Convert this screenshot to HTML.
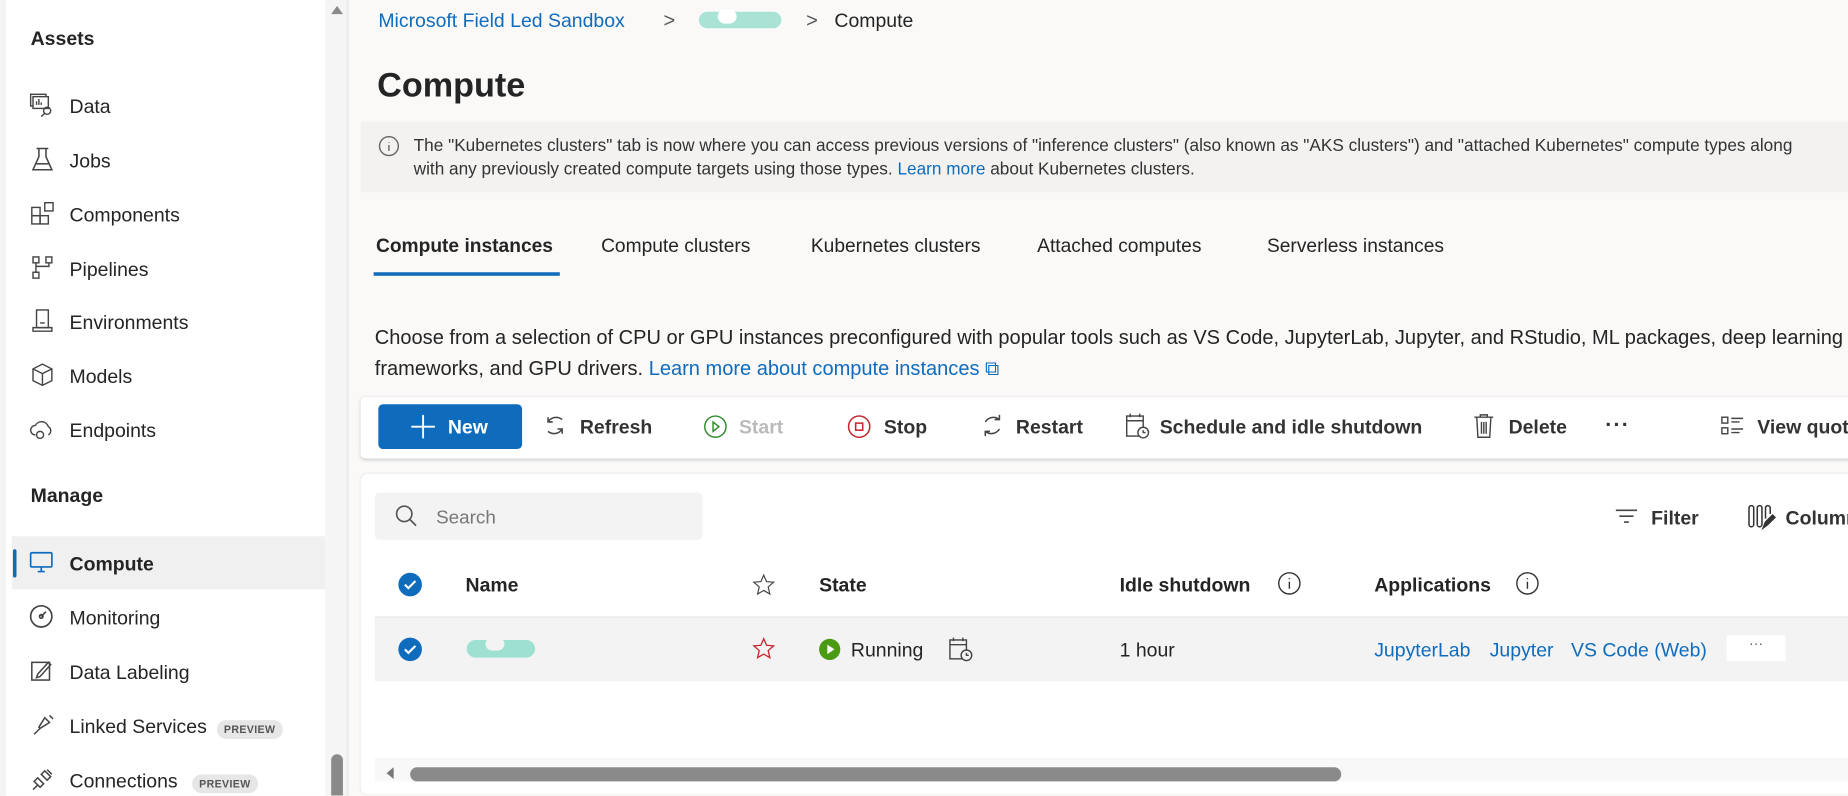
<!DOCTYPE html>
<html><head><meta charset="utf-8"><style>
*{box-sizing:border-box;margin:0;padding:0}
html,body{width:1848px;height:795px;overflow:hidden;background:#faf9f8;font-family:"Liberation Sans",sans-serif;color:#242424}
#w{position:absolute;left:0;top:0;width:1568px;height:675px;transform:scale(1.178571);transform-origin:0 0;overflow:hidden}
.a{position:absolute;white-space:nowrap}
.nav{font-size:16.5px;color:#242424}
.ic{position:absolute}
svg{overflow:visible}
.blue{color:#0f6cbd}
.pill{font-size:9px;background:#e6e6e6;color:#555;border-radius:9px;padding:3px 6px;font-weight:bold;letter-spacing:.3px}
.tb{font-size:16.5px;font-weight:600;color:#333}
</style></head><body><div id="w">
<!-- sidebar -->
<div class="a" style="left:0;top:0;width:5px;height:675px;background:#f3f3f3"></div>
<div class="a" style="left:5px;top:0;width:271px;height:675px;background:#fff"></div>
<div class="a" style="left:276px;top:0;width:18px;height:675px;background:#f5f5f5"></div>
<div class="a" style="left:294px;top:0;width:2px;height:675px;background:#ececec"></div>
<div class="a" style="left:281px;top:5px;width:0;height:0;border-left:5px solid transparent;border-right:5px solid transparent;border-bottom:7px solid #8a8a8a"></div>
<div class="a" style="left:281px;top:640px;width:10px;height:40px;background:#8a8a8a;border-radius:5px"></div>

<div class="a" style="left:26px;top:24px;font-size:16.5px;font-weight:600">Assets</div>
<svg class="ic" style="left:25px;top:79px" width="22" height="22" fill="none" stroke="#444" stroke-width="1.2"><rect x="1" y="1" width="13" height="10"/><rect x="3" y="3" width="13" height="10" fill="#fff"/><path d="M6 10V7M8 10V5M10 10V8"/><circle cx="15" cy="15" r="3"/><path d="M13 17l-3 3"/></svg>
<div class="a nav" style="left:59px;top:82px">Data</div>
<svg class="ic" style="left:27px;top:125px" width="20" height="22" fill="none" stroke="#444" stroke-width="1.3"><path d="M4 1h10M6 1v7L1 19h16L12 8V1"/><path d="M3 14h12"/></svg>
<div class="a nav" style="left:59px;top:128px">Jobs</div>
<svg class="ic" style="left:26px;top:171px" width="22" height="22" fill="none" stroke="#444" stroke-width="1.2"><rect x="1" y="5" width="7" height="7"/><rect x="1" y="12" width="7" height="7"/><rect x="8" y="12" width="7" height="7"/><rect x="12" y="1" width="7" height="7"/></svg>
<div class="a nav" style="left:59px;top:174px">Components</div>
<svg class="ic" style="left:27px;top:217px" width="22" height="22" fill="none" stroke="#444" stroke-width="1.2"><rect x="1" y="1" width="5" height="5"/><rect x="12" y="1" width="5" height="5"/><rect x="1" y="14" width="5" height="5"/><path d="M3.5 6v8M14.5 6v3H3.5"/></svg>
<div class="a nav" style="left:59px;top:220px">Pipelines</div>
<svg class="ic" style="left:27px;top:262px" width="22" height="22" fill="none" stroke="#444" stroke-width="1.2"><rect x="4" y="1" width="10" height="15"/><path d="M1 19h16v-3H1zM7 12h4"/></svg>
<div class="a nav" style="left:59px;top:265px">Environments</div>
<svg class="ic" style="left:26px;top:308px" width="22" height="22" fill="none" stroke="#444" stroke-width="1.2"><path d="M10 1l8 4v10l-8 4-8-4V5zM2 5l8 4 8-4M10 9v10"/></svg>
<div class="a nav" style="left:59px;top:311px">Models</div>
<svg class="ic" style="left:25px;top:354px" width="22" height="22" fill="none" stroke="#444" stroke-width="1.2"><path d="M5 15a4 4 0 010-8 6 6 0 0111 1 4 4 0 010 7"/><circle cx="9" cy="15" r="3"/></svg>
<div class="a nav" style="left:59px;top:357px">Endpoints</div>

<div class="a" style="left:26px;top:412px;font-size:16.5px;font-weight:600">Manage</div>
<div class="a" style="left:10px;top:455px;width:266px;height:45px;background:#f0f0f0"></div>
<div class="a" style="left:11px;top:466px;width:3px;height:24px;background:#0f6cbd;border-radius:2px"></div>
<svg class="ic" style="left:25px;top:467px" width="22" height="22" fill="none" stroke="#0f6cbd" stroke-width="1.4"><rect x="1" y="2" width="18" height="12" rx="1"/><path d="M7 18h6M10 14v4"/></svg>
<div class="a nav" style="left:59px;top:470px;font-weight:600">Compute</div>
<svg class="ic" style="left:25px;top:513px" width="22" height="22" fill="none" stroke="#444" stroke-width="1.4"><circle cx="10" cy="10" r="9"/><path d="M10 10l4-4"/><circle cx="10" cy="10" r="1.5"/></svg>
<div class="a nav" style="left:59px;top:516px">Monitoring</div>
<svg class="ic" style="left:26px;top:559px" width="22" height="22" fill="none" stroke="#444" stroke-width="1.3"><rect x="1" y="3" width="15" height="15"/><path d="M6 13l9-10 2 2-9 10-3 1z"/></svg>
<div class="a nav" style="left:59px;top:562px">Data Labeling</div>
<svg class="ic" style="left:26px;top:605px" width="22" height="22" fill="none" stroke="#444" stroke-width="1.3"><path d="M3 18l5-5M7 12l5-8 4 4-8 5zM16 2l3 3"/></svg>
<div class="a nav" style="left:59px;top:608px">Linked Services</div>
<div class="a pill" style="left:184px;top:611px">PREVIEW</div>
<svg class="ic" style="left:26px;top:651px" width="22" height="22" fill="none" stroke="#444" stroke-width="1.3"><path d="M2 19l4-4M14 2l4 4M6 9l5 5-3 3-5-5zM9 6l5 5 3-3-5-5z"/></svg>
<div class="a nav" style="left:59px;top:654px">Connections</div>
<div class="a pill" style="left:163px;top:657px">PREVIEW</div>

<!-- main -->
<div class="a blue" style="left:321px;top:9px;font-size:16.5px">Microsoft Field Led Sandbox</div>
<div class="a" style="left:563px;top:8px;font-size:17px;color:#555">&gt;</div>
<div class="a" style="left:587px;top:8px;width:80px;height:20px;"><div style="position:absolute;left:6px;top:2px;width:70px;height:14px;background:#9ee0d2;border-radius:8px;opacity:.9"></div><div style="position:absolute;left:22px;top:0;width:16px;height:12px;background:#fff;border-radius:8px"></div></div>
<div class="a" style="left:684px;top:8px;font-size:17px;color:#555">&gt;</div>
<div class="a" style="left:708px;top:9px;font-size:16.5px">Compute</div>
<div class="a" style="left:320px;top:57px;font-size:29px;font-weight:600">Compute</div>

<div class="a" style="left:306px;top:103px;width:1262px;height:60px;background:#f3f2f1"></div>
<svg class="ic" style="left:321px;top:115px" width="20" height="20" fill="none" stroke="#666" stroke-width="1.2"><circle cx="9" cy="9" r="8"/><path d="M9 8v5M9 5.5v.5"/></svg>
<div class="a" style="left:351px;top:115px;font-size:14.6px;line-height:19.5px;color:#333">The "Kubernetes clusters" tab is now where you can access previous versions of "inference clusters" (also known as "AKS clusters") and "attached Kubernetes" compute types along<br>with any previously created compute targets using those types. <span class="blue">Learn more</span> about Kubernetes clusters.</div>

<div class="a" style="left:319px;top:200px;font-size:16.3px;font-weight:600">Compute instances</div>
<div class="a" style="left:317px;top:231px;width:158px;height:3px;background:#0f6cbd"></div>
<div class="a" style="left:510px;top:200px;font-size:16.3px">Compute clusters</div>
<div class="a" style="left:688px;top:200px;font-size:16.3px">Kubernetes clusters</div>
<div class="a" style="left:880px;top:200px;font-size:16.3px">Attached computes</div>
<div class="a" style="left:1075px;top:200px;font-size:16.3px">Serverless instances</div>

<div class="a" style="left:318px;top:274px;font-size:17px;line-height:26px">Choose from a selection of CPU or GPU instances preconfigured with popular tools such as VS Code, JupyterLab, Jupyter, and RStudio, ML packages, deep learning<br>frameworks, and GPU drivers. <span class="blue">Learn more about compute instances &#x29C9;</span></div>

<!-- toolbar -->
<div class="a" style="left:306px;top:337px;width:1270px;height:52px;background:#fff;border-radius:4px;box-shadow:0 1px 3px rgba(0,0,0,.18)"></div>
<div class="a" style="left:321px;top:343px;width:122px;height:38px;background:#0f6cbd;border-radius:4px"></div>
<svg class="ic" style="left:349px;top:352px" width="20" height="20" stroke="#fff" stroke-width="1.6"><path d="M10 0v20M0 10h20"/></svg>
<div class="a" style="left:380px;top:354px;font-size:16.5px;font-weight:600;color:#fff">New</div>
<svg class="ic" style="left:461px;top:351px" width="22" height="22" fill="none" stroke="#444" stroke-width="1.3"><path d="M16 5a8 8 0 00-12 2M4 15a8 8 0 0012-2M4 3v4h4M16 17v-4h-4"/></svg>
<div class="a tb" style="left:492px;top:354px">Refresh</div>
<svg class="ic" style="left:597px;top:352px" width="20" height="20" fill="none" stroke="#2b8a2b" stroke-width="1.2"><circle cx="10" cy="10" r="9"/><path d="M8 6l5 4-5 4z"/></svg>
<div class="a tb" style="left:627px;top:354px;color:#bbb">Start</div>
<svg class="ic" style="left:719px;top:352px" width="20" height="20" fill="none" stroke="#c4262e" stroke-width="1.3"><circle cx="10" cy="10" r="9"/><rect x="7" y="7" width="6" height="6"/></svg>
<div class="a tb" style="left:750px;top:354px">Stop</div>
<svg class="ic" style="left:832px;top:351px" width="22" height="22" fill="none" stroke="#444" stroke-width="1.3"><path d="M16 5a8 8 0 00-12 2M4 15a8 8 0 0012-2M16 1v4h-4M4 19v-4h4"/></svg>
<div class="a tb" style="left:862px;top:354px">Restart</div>
<svg class="ic" style="left:955px;top:350px" width="22" height="24" fill="none" stroke="#444" stroke-width="1.2"><rect x="1" y="3" width="14" height="17"/><path d="M1 7h14M4 1v3M12 1v3"/><circle cx="15" cy="17" r="4.5" fill="#fff"/><path d="M15 15v2h2"/></svg>
<div class="a tb" style="left:984px;top:354px">Schedule and idle shutdown</div>
<svg class="ic" style="left:1250px;top:351px" width="20" height="22" fill="none" stroke="#444" stroke-width="1.2"><path d="M1 3h16M6 3V1h6v2M3 3l1 17h10l1-17M7 7v10M9 7v10M11 7v10"/></svg>
<div class="a tb" style="left:1280px;top:354px">Delete</div>
<div class="a" style="left:1362px;top:350px;font-size:18px;font-weight:bold;color:#333;letter-spacing:1px">···</div>
<svg class="ic" style="left:1460px;top:353px" width="22" height="18" fill="none" stroke="#444" stroke-width="1.2"><rect x="1" y="1" width="5" height="5"/><rect x="1" y="10" width="5" height="5"/><path d="M9 2h10M9 5h7M9 11h10M9 14h7"/></svg>
<div class="a tb" style="left:1491px;top:354px">View quota</div>

<!-- table card -->
<div class="a" style="left:306px;top:402px;width:1270px;height:272px;background:#fff;border-radius:6px;box-shadow:0 0 2px rgba(0,0,0,.12)"></div>
<div class="a" style="left:318px;top:418px;width:278px;height:40px;background:#f3f3f3;border-radius:4px"></div>
<svg class="ic" style="left:335px;top:428px" width="20" height="20" fill="none" stroke="#555" stroke-width="1.4"><circle cx="8" cy="8" r="6.5"/><path d="M13 13l5 5"/></svg>
<div class="a" style="left:370px;top:431px;font-size:16px;color:#777">Search</div>
<svg class="ic" style="left:1370px;top:431px" width="20" height="16" stroke="#444" stroke-width="1.4"><path d="M1 2h18M4 7h12M8 12h4"/></svg>
<div class="a tb" style="left:1401px;top:431px">Filter</div>
<svg class="ic" style="left:1483px;top:428px" width="24" height="22" fill="none" stroke="#333" stroke-width="1.3"><rect x="1" y="1" width="4" height="18" rx="2"/><rect x="8" y="1" width="4" height="18" rx="2"/><path d="M15 12V3a2 2 0 014 0v5"/><path d="M13 20l2-5 6-6 2 2-6 6z" fill="#333"/></svg>
<div class="a tb" style="left:1515px;top:431px">Columns</div>

<svg class="ic" style="left:338px;top:486px" width="20" height="20"><circle cx="10" cy="10" r="10" fill="#0f6cbd"/><path d="M5.5 10l3 3 6-6" stroke="#fff" stroke-width="1.8" fill="none"/></svg>
<div class="a" style="left:395px;top:488px;font-size:16.5px;font-weight:600">Name</div>
<svg class="ic" style="left:639px;top:487px" width="18" height="18" fill="none" stroke="#444" stroke-width="1"><path d="M9 1l2.4 5.5 6 .5-4.6 4 1.4 6L9 14l-5.2 3 1.4-6L.6 7l6-.5z"/></svg>
<div class="a" style="left:695px;top:488px;font-size:16.5px;font-weight:600">State</div>
<div class="a" style="left:950px;top:488px;font-size:16.5px;font-weight:600">Idle shutdown</div>
<svg class="ic" style="left:1084px;top:485px" width="20" height="20" fill="none" stroke="#333" stroke-width="1.2"><circle cx="10" cy="10" r="9"/><path d="M10 8.5v6M10 5.5v1"/></svg>
<div class="a" style="left:1166px;top:488px;font-size:16.5px;font-weight:600">Applications</div>
<svg class="ic" style="left:1286px;top:485px" width="20" height="20" fill="none" stroke="#333" stroke-width="1.2"><circle cx="10" cy="10" r="9"/><path d="M10 8.5v6M10 5.5v1"/></svg>

<div class="a" style="left:318px;top:523px;width:1258px;height:1px;background:#e5e5e5"></div>
<div class="a" style="left:318px;top:524px;width:1258px;height:54px;background:#f3f3f3"></div>
<svg class="ic" style="left:338px;top:541px" width="20" height="20"><circle cx="10" cy="10" r="10" fill="#0f6cbd"/><path d="M5.5 10l3 3 6-6" stroke="#fff" stroke-width="1.8" fill="none"/></svg>
<div class="a" style="left:396px;top:543px;width:58px;height:15px;background:#9ee0d2;border-radius:8px"></div>
<div class="a" style="left:412px;top:541px;width:16px;height:11px;background:#f3f3f3;border-radius:8px"></div>
<svg class="ic" style="left:639px;top:541px" width="18" height="18" fill="none" stroke="#c4262e" stroke-width="1.1"><path d="M9 1l2.4 5.5 6 .5-4.6 4 1.4 6L9 14l-5.2 3 1.4-6L.6 7l6-.5z"/></svg>
<svg class="ic" style="left:695px;top:542px" width="18" height="18"><circle cx="9" cy="9" r="9" fill="#4a9a14"/><path d="M7 5l6 4-6 4z" fill="#fff"/></svg>
<div class="a" style="left:722px;top:543px;font-size:16.5px">Running</div>
<svg class="ic" style="left:805px;top:540px" width="22" height="24" fill="none" stroke="#444" stroke-width="1.2"><rect x="1" y="3" width="14" height="16"/><path d="M1 7h14M4 1v3M12 1v3"/><circle cx="15" cy="16" r="4.5" fill="#f3f3f3"/><path d="M15 14v2h2"/></svg>
<div class="a" style="left:950px;top:543px;font-size:16.5px">1 hour</div>
<div class="a blue" style="left:1166px;top:543px;font-size:16.5px">JupyterLab</div>
<div class="a blue" style="left:1264px;top:543px;font-size:16.5px">Jupyter</div>
<div class="a blue" style="left:1333px;top:543px;font-size:16.5px">VS Code (Web)</div>
<div class="a" style="left:1465px;top:539px;width:50px;height:22px;background:#fff;text-align:center;font-size:12px;color:#555;line-height:14px">···</div>

<div class="a" style="left:318px;top:643px;width:1258px;height:20px;background:#f8f8f8"></div>
<div class="a" style="left:328px;top:651px;width:0;height:0;border-top:5px solid transparent;border-bottom:5px solid transparent;border-right:6px solid #777"></div>
<div class="a" style="left:348px;top:651px;width:790px;height:12px;background:#8a8a8a;border-radius:6px"></div>
</div></body></html>
